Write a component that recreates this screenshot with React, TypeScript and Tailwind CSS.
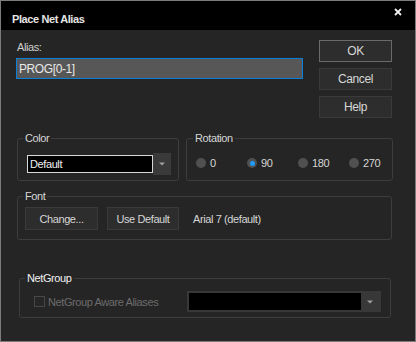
import React from 'react';

const btn =
  'flex items-center justify-center bg-[#2d2d2d] border border-[#3a3a3a] text-[#d6d6d6]';

const Arrow = () => (
  <svg width="6" height="4" viewBox="0 0 6 4">
    <path d="M0 0.5h6L3 3.5z" fill="#a0a0a0" />
  </svg>
);

const Radio = ({ label, checked }: { label: string; checked?: boolean }) => (
  <div className="w-[51px] last:w-auto flex items-center gap-[4px]">
    <span className="w-[10px] h-[10px] rounded-full bg-[#505050] flex items-center justify-center">
      {checked && <span className="w-[5px] h-[5px] rounded-full bg-[#1e9bff]" />}
    </span>
    <span className="text-[#d6d6d6]">{label}</span>
  </div>
);

export default function App() {
  return (
    <div className="w-[416px] h-[342px] border border-[#7c7c7c] bg-[#252525] flex flex-col font-['Liberation_Sans',Arial,sans-serif] text-[11px] tracking-[-0.4px] leading-[14px] text-[#d6d6d6]">
      {/* Title bar */}
      <div className="h-[29px] bg-black flex items-center justify-between pl-[11px] pr-[13px] shrink-0">
        <span className="font-bold text-[#e6e6e6] mt-[6px]">Place Net Alias</span>
        <svg width="8" height="8" viewBox="0 0 8 8" className="mb-[8px]">
          <path d="M1 1l6 6M7 1L1 7" stroke="#f0f0f0" strokeWidth="1.8" />
        </svg>
      </div>

      <div className="pl-[15px] pr-[23px] flex flex-col">
        {/* Alias + buttons */}
        <div className="flex mt-[10px]">
          <div className="w-[287px] flex flex-col">
            <span className="ml-[1px] text-[#cfcfcf]">Alias:</span>
            <div className="mt-[4px] h-[21px] bg-[#575757] border border-[#0a7fd6] flex items-center pl-[2px] text-[12px] text-[#e8e8e8]">
              PROG[0-1]
            </div>
          </div>
          <div className="ml-[16px] flex flex-col gap-[6px]">
            <button className={`${btn} w-[73px] h-[22px] border-[#6a6a6a] text-[12px]`}>OK</button>
            <button className={`${btn} w-[73px] h-[22px] text-[12px]`}>Cancel</button>
            <button className={`${btn} w-[73px] h-[22px] text-[12px]`}>Help</button>
          </div>
        </div>

        {/* Color / Rotation */}
        <div className="flex gap-[7px] pl-[1px] mt-[13px]">
          <fieldset className="w-[162px] shrink-0 border border-[#3d3d3d] rounded-[3px]">
            <legend className="ml-[5px] px-[2px] text-[#d6d6d6]">Color</legend>
            <div className="mt-[8px] mb-[5px] ml-[9px] flex items-center h-[22px]">
              <div className="w-[126px] h-[18px] bg-black border border-[#d8d8d8] flex items-center pl-[2px] text-[#f0f0f0]">
                Default
              </div>
              <div className="w-[18px] h-[22px] bg-[#3a3a3a] flex items-center justify-center">
                <Arrow />
              </div>
            </div>
          </fieldset>
          <fieldset className="w-[207px] shrink-0 border border-[#3d3d3d] rounded-[3px]">
            <legend className="ml-[6px] px-[2px] text-[#d6d6d6]">Rotation</legend>
            <div className="mt-[7px] mb-[6px] ml-[9px] flex items-center h-[22px]">
              <Radio label="0" />
              <Radio label="90" checked />
              <Radio label="180" />
              <Radio label="270" />
            </div>
          </fieldset>
        </div>

        {/* Font */}
        <fieldset className="ml-[1px] mt-[8px] w-[375px] border border-[#3d3d3d] rounded-[3px]">
          <legend className="ml-[5px] px-[2px] text-[#d6d6d6]">Font</legend>
          <div className="mt-[4px] mb-[9px] ml-[7px] flex items-center">
            <button className={`${btn} w-[73px] h-[23px]`}>Change...</button>
            <button className={`${btn} w-[72px] h-[23px] ml-[9px]`}>Use Default</button>
            <span className="ml-[14px] text-[#d6d6d6]">Arial 7 (default)</span>
          </div>
        </fieldset>

        {/* NetGroup */}
        <fieldset className="ml-[3px] mt-[31px] w-[372px] border border-[#3d3d3d] rounded-[3px]">
          <legend className="ml-[5px] px-[2px] text-[#f2f2f2]">NetGroup</legend>
          <div className="mt-[6px] mb-[5px] ml-[14px] flex items-center">
            <div className="w-[153px] flex items-center gap-[3px]">
              <span className="w-[11px] h-[11px] border border-[#474747] bg-[#262626]" />
              <span className="text-[#6c6c6c]">NetGroup Aware Aliases</span>
            </div>
            <div className="w-[194px] h-[21px] bg-[#383838] p-[2px] flex">
              <div className="flex-1 bg-black" />
              <div className="w-[18px] flex items-center justify-center">
                <Arrow />
              </div>
            </div>
          </div>
        </fieldset>
      </div>
    </div>
  );
}
